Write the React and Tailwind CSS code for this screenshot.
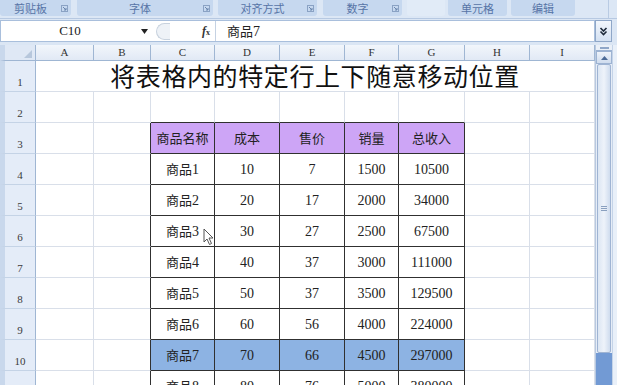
import React from "react";

const cols = [36, 58, 57, 64, 65, 65, 54, 66, 65, 65];
const letters = ["", "A", "B", "C", "D", "E", "F", "G", "H", "I"];

const header = ["商品名称", "成本", "售价", "销量", "总收入"];
const data = [
  ["商品1", "10", "7", "1500", "10500"],
  ["商品2", "20", "17", "2000", "34000"],
  ["商品3", "30", "27", "2500", "67500"],
  ["商品4", "40", "37", "3000", "111000"],
  ["商品5", "50", "37", "3500", "129500"],
  ["商品6", "60", "56", "4000", "224000"],
  ["商品7", "70", "66", "4500", "297000"],
  ["商品8", "80", "76", "5000", "380000"],
];

const cjk = { fontFamily: '"Noto Sans CJK SC", "Noto Sans", sans-serif' };
const serif = { fontFamily: '"Liberation Serif", "Noto Sans CJK SC", serif' };

const Launcher = () => (
  <svg width="7" height="7" viewBox="0 0 7 7" className="mr-[3px] shrink-0">
    <rect x="0.5" y="0.5" width="6" height="6" fill="none" stroke="#8aa2c4" strokeWidth="1" />
    <path d="M2 2 L5 5 M5 3 V5 H3" stroke="#6b86ad" strokeWidth="1" fill="none" />
  </svg>
);

const Group = ({ label, w, ml, launcher = true, light }) => (
  <div
    className={`flex items-center h-[16px] rounded-b-[3px] ${light ? "bg-[#e1ebf7]" : "bg-[#c6d8ef]"}`}
    style={{ width: w, marginLeft: ml }}
  >
    <span className="flex-1 text-center text-[11px] leading-none text-[#5674a6]" style={cjk}>
      {label}
    </span>
    {launcher && <Launcher />}
  </div>
);

function Cell({ row, ci, children }) {
  const w = cols[ci];
  const inTable = ci >= 3 && ci <= 7;
  const tableRow = row >= 3 && row <= 11;
  let br = "border-r-[#d9dfe9]";
  let bb = "border-b-[#d9dfe9]";
  if (tableRow && (inTable || ci === 2)) br = "border-r-[#303030]";
  if (inTable && row >= 2 && row <= 11) bb = "border-b-[#303030]";
  let bg = "bg-white";
  if (inTable && row === 3) bg = "bg-[#cda5f6]";
  if (inTable && row === 10) bg = "bg-[#8db3e3]";
  return (
    <div
      className={`h-full shrink-0 border-r border-b ${br} ${bb} ${bg} flex items-center justify-center text-[13.5px] text-[#222]`}
      style={{ width: w, ...serif }}
    >
      {children}
    </div>
  );
}

function Row({ n }) {
  const cells = [];
  if (n === 1) {
    cells.push(
      <div
        key="t"
        className="h-full border-r border-b border-[#d9dfe9] bg-white flex items-center justify-center text-[25px] text-[#111] tracking-[0.6px]"
        style={{ width: 595 - 36, ...cjk }}
      >
        将表格内的特定行上下随意移动位置
      </div>
    );
  } else {
    for (let ci = 1; ci < cols.length; ci++) {
      let content = null;
      if (ci >= 3 && ci <= 7) {
        if (n === 3) content = <span style={cjk} className="text-[13px]">{header[ci - 3]}</span>;
        else if (n >= 4 && n <= 11) {
          const v = data[n - 4][ci - 3];
          content = ci === 3 ? (
            <span className="text-[13px]" style={{ fontFamily: '"Noto Sans CJK SC", sans-serif' }}>
              {v.slice(0, 2)}
              <span style={serif} className="text-[14px]">{v.slice(2)}</span>
            </span>
          ) : (
            <span className="text-[14px]">{v}</span>
          );
        }
      }
      cells.push(
        <Cell key={ci} row={n} ci={ci}>
          {content}
        </Cell>
      );
    }
  }
  return (
    <div className="flex h-[31px] shrink-0">
      <div
        className="w-[36px] shrink-0 h-full border-l-[5px] border-l-[#c9d8ec] border-r border-r-[#9fb6d3] border-b border-b-[#c4d3e6] bg-[#e4ecf8] flex items-end justify-center pb-[1px] text-[11px] text-[#3b3b3b]"
        style={serif}
      >
        {n}
      </div>
      {cells}
    </div>
  );
}

export default function App() {
  return (
    <div className="w-[617px] h-[385px] overflow-hidden bg-[#dbe6f4] relative flex flex-col">
      {/* ribbon group labels */}
      <div className="h-[19px] shrink-0 flex items-start bg-[#dce7f5] border-b border-[#b7c9e2]">
        <Group label="剪贴板" w={71} ml={0} />
        <Group label="字体" w={136} ml={6} />
        <Group label="对齐方式" w={99} ml={5} />
        <Group label="数字" w={79} ml={6} />
        <Group label="" w={38} ml={5} launcher={false} light />
        <Group label="单元格" w={59} ml={3} launcher={false} />
        <Group label="编辑" w={64} ml={4} launcher={false} />
        <div className="ml-auto mr-[8px] w-px h-[18px] bg-[#b9cbe3]" />
      </div>

      {/* formula bar */}
      <div className="h-[22px] mt-[1px] shrink-0 flex items-stretch">
        <div className="flex-1 flex items-center bg-white border border-[#a9bfdc]">
          <div className="w-[138px] text-center text-[13px] text-[#222]" style={serif}>
            C10
          </div>
          <svg width="7" height="5" viewBox="0 0 7 5" className="ml-[2px]">
            <path d="M0 0 H7 L3.5 5 Z" fill="#222" />
          </svg>
          <div className="ml-[8px] w-[14px] h-[17px] rounded-l-full border border-[#c8d2de] bg-[#eef2f7] border-r-0" />
          <div className="w-[32px]" />
          <span className="italic text-[12px] text-[#333] font-semibold" style={serif}>
            f<span className="text-[8px] not-italic">x</span>
          </span>
          <div className="ml-[5px] w-px h-full bg-[#c5d2e3]" />
          <span className="ml-[11px] text-[13px] text-[#222]" style={cjk}>
            商品<span style={serif} className="text-[14px]">7</span>
          </span>
        </div>
        <div className="w-[17px] shrink-0 flex items-center justify-center border border-[#8fa7c8] bg-gradient-to-b from-[#f3f7fc] to-[#d4e1f2]">
          <svg width="9" height="9" viewBox="0 0 9 9">
            <path d="M1.5 1 L4.5 4 L7.5 1 M1.5 4.5 L4.5 7.5 L7.5 4.5" stroke="#1e2a3a" strokeWidth="1.6" fill="none" />
          </svg>
        </div>
        <div className="w-[5px] shrink-0" />
      </div>

      <div className="h-[3px] shrink-0" />

      {/* sheet + scrollbar */}
      <div className="flex flex-1 min-h-0">
        <div className="w-[595px] shrink-0 flex flex-col overflow-hidden">
          <div className="flex h-[16px] shrink-0">
            <div className="w-[36px] shrink-0 border-l-[5px] border-l-[#c9d8ec] border-r border-b border-[#9fb6d3] bg-[#dfe8f5] flex items-end justify-end pr-[3px] pb-[2px]">
              <svg width="8" height="8" viewBox="0 0 8 8">
                <path d="M8 0 V8 H0 Z" fill="#b7c7dc" />
              </svg>
            </div>
            {letters.slice(1).map((l, i) => (
              <div
                key={l}
                className="shrink-0 h-full border-r border-b border-[#9fb6d3] bg-gradient-to-b from-[#f2f6fb] to-[#e1e9f5] flex items-center justify-center text-[11px] text-[#333]"
                style={{ width: cols[i + 1], ...serif }}
              >
                {l}
              </div>
            ))}
          </div>
          {Array.from({ length: 11 }, (_, i) => (
            <Row key={i} n={i + 1} />
          ))}
        </div>

        {/* vertical scrollbar */}
        <div className="w-[17px] shrink-0 flex flex-col bg-[#e6edf7] border-l border-[#b8c9e0]">
          <div className="h-[6px] shrink-0 flex items-center justify-center border-b border-[#9db3d2] bg-[#eaf0f8]">
            <div className="w-[9px] h-[2px] bg-[#8ea6c8]" />
          </div>
          <div className="h-[13px] shrink-0 flex items-center justify-center border border-[#9db3d2] bg-gradient-to-b from-[#eef3fa] to-[#cfdcee]">
            <svg width="7" height="4" viewBox="0 0 7 4">
              <path d="M0 4 L3.5 0 L7 4 Z" fill="#4c6a96" />
            </svg>
          </div>
          <div className="h-[289px] shrink-0 mx-[1px] border border-[#9fb4d3] rounded-[2px] bg-gradient-to-r from-[#dce6f3] via-[#eef3fa] to-[#cfdcee] flex items-center justify-center">
            <div className="flex flex-col gap-[1px]">
              <div className="w-[6px] h-px bg-[#8aa0bf]" />
              <div className="w-[6px] h-px bg-[#8aa0bf]" />
              <div className="w-[6px] h-px bg-[#8aa0bf]" />
            </div>
          </div>
          <div className="flex-1 bg-[#729ad4]" />
        </div>
        <div className="w-[5px] shrink-0 bg-[#e9f0f9] border-l border-[#c5d4e8]" />
      </div>

      {/* mouse pointer */}
      <svg className="absolute left-[203px] top-[228px]" width="12" height="18" viewBox="0 0 12 18">
        <path d="M1 1 V14 L4 11 L6.5 16.5 L8.5 15.5 L6 10 H10 Z" fill="#fff" stroke="#555" strokeWidth="1" strokeLinejoin="round" />
      </svg>
    </div>
  );
}
